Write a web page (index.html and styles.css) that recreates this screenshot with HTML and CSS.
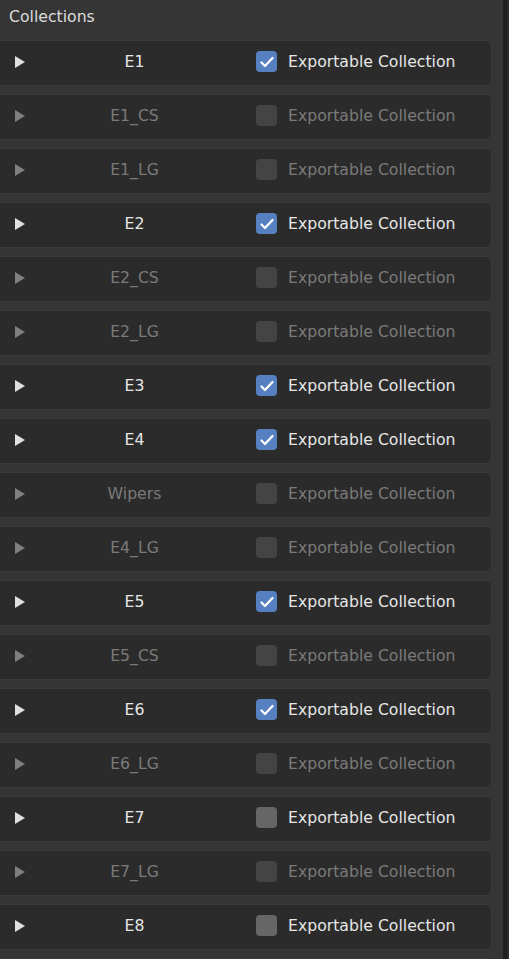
FILE: index.html
```html
<!DOCTYPE html>
<html lang="en">
<head>
  <meta charset="UTF-8">
  <meta name="viewport" content="width=device-width, initial-scale=1.0">
  <title>Collections</title>
  <link rel="stylesheet" href="styles.css">
</head>
<body>
  <div class="panel">
    <div class="content">
      <div class="panel-title">Collections</div>
      <div class="list" id="list"></div>
    </div>
    <div class="scrollbar"></div>
  </div>

  <script>
    // name, exportable, enabled
    const collections = [
      ['E1', true, true],
      ['E1_CS', false, false],
      ['E1_LG', false, false],
      ['E2', true, true],
      ['E2_CS', false, false],
      ['E2_LG', false, false],
      ['E3', true, true],
      ['E4', true, true],
      ['Wipers', false, false],
      ['E4_LG', false, false],
      ['E5', true, true],
      ['E5_CS', false, false],
      ['E6', true, true],
      ['E6_LG', false, false],
      ['E7', false, true],
      ['E7_LG', false, false],
      ['E8', false, true]
    ];

    const list = document.getElementById('list');

    collections.forEach(([name, checked, enabled]) => {
      const row = document.createElement('div');
      row.className = 'row' + (enabled ? '' : ' disabled');
      row.innerHTML = `
        <svg class="arrow" width="10" height="12" viewBox="0 0 10 12">
          <path d="M0 0 L10 6 L0 12 Z" fill="currentColor"/>
        </svg>
        <div class="name">${name}</div>
        <div class="check ${checked ? 'checked' : ''}">
          ${checked ? '<svg width="14" height="12" viewBox="0 0 14 12"><path d="M1.5 6.5 L5 10 L12.5 2" fill="none" stroke="#fff" stroke-width="2.2" stroke-linecap="round" stroke-linejoin="round"/></svg>' : ''}
        </div>
        <div class="label">Exportable Collection</div>`;
      list.appendChild(row);
    });

    // next row peeking in under the fold
    const more = document.createElement('div');
    more.className = 'row';
    list.appendChild(more);
  </script>
</body>
</html>
```

FILE: styles.css
```css
:root {
  --panel-bg: #353535;
  --row-bg: #2b2b2b;
  --row-border: #3a3a3a;
  --text: #e6e6e6;
  --text-dim: #7a7a7a;
  --check-on: #5680c2;
  --check-off: #666666;
  --check-dim: #444444;
}

body {
  margin: 0;
  height: 100vh;
  overflow: hidden;
  background: var(--panel-bg);
  font-family: 'DejaVu Sans', Verdana, sans-serif;
  font-size: 15.7px;
  color: var(--text);
}

.panel {
  display: flex;
  height: 100%;
}

.content {
  flex: 1;
  overflow: hidden;
}

.panel-title {
  height: 40px;
  padding-left: 9px;
  line-height: 34px;
  color: #dcdcdc;
}

.list {
  display: flex;
  flex-direction: column;
  gap: 8px;
  margin-left: -6px;
  margin-right: 11px;
}

.row {
  display: flex;
  flex: none;
  align-items: center;
  height: 46px;
  padding: 0 0 3px 20px;
  box-sizing: border-box;
  background: var(--row-bg);
  border: 1px solid var(--row-border);
  border-radius: 6px;
}

.arrow {
  flex: none;
  color: #e0e0e0;
}

.name {
  width: 219px;
  text-align: center;
}

.check {
  flex: none;
  width: 21px;
  height: 21px;
  margin-left: 12px;
  margin-right: 11px;
  border-radius: 4px;
  background: var(--check-off);
  display: flex;
  align-items: center;
  justify-content: center;
}

.check.checked {
  background: var(--check-on);
}

.disabled {
  color: var(--text-dim);
}

.disabled .arrow {
  color: #7f7f7f;
}

.disabled .check {
  background: var(--check-dim);
}

.scrollbar {
  width: 4px;
  flex: none;
  background: #1f1f1f;
  border-right: 2px solid #2a2a2a;
}
```
